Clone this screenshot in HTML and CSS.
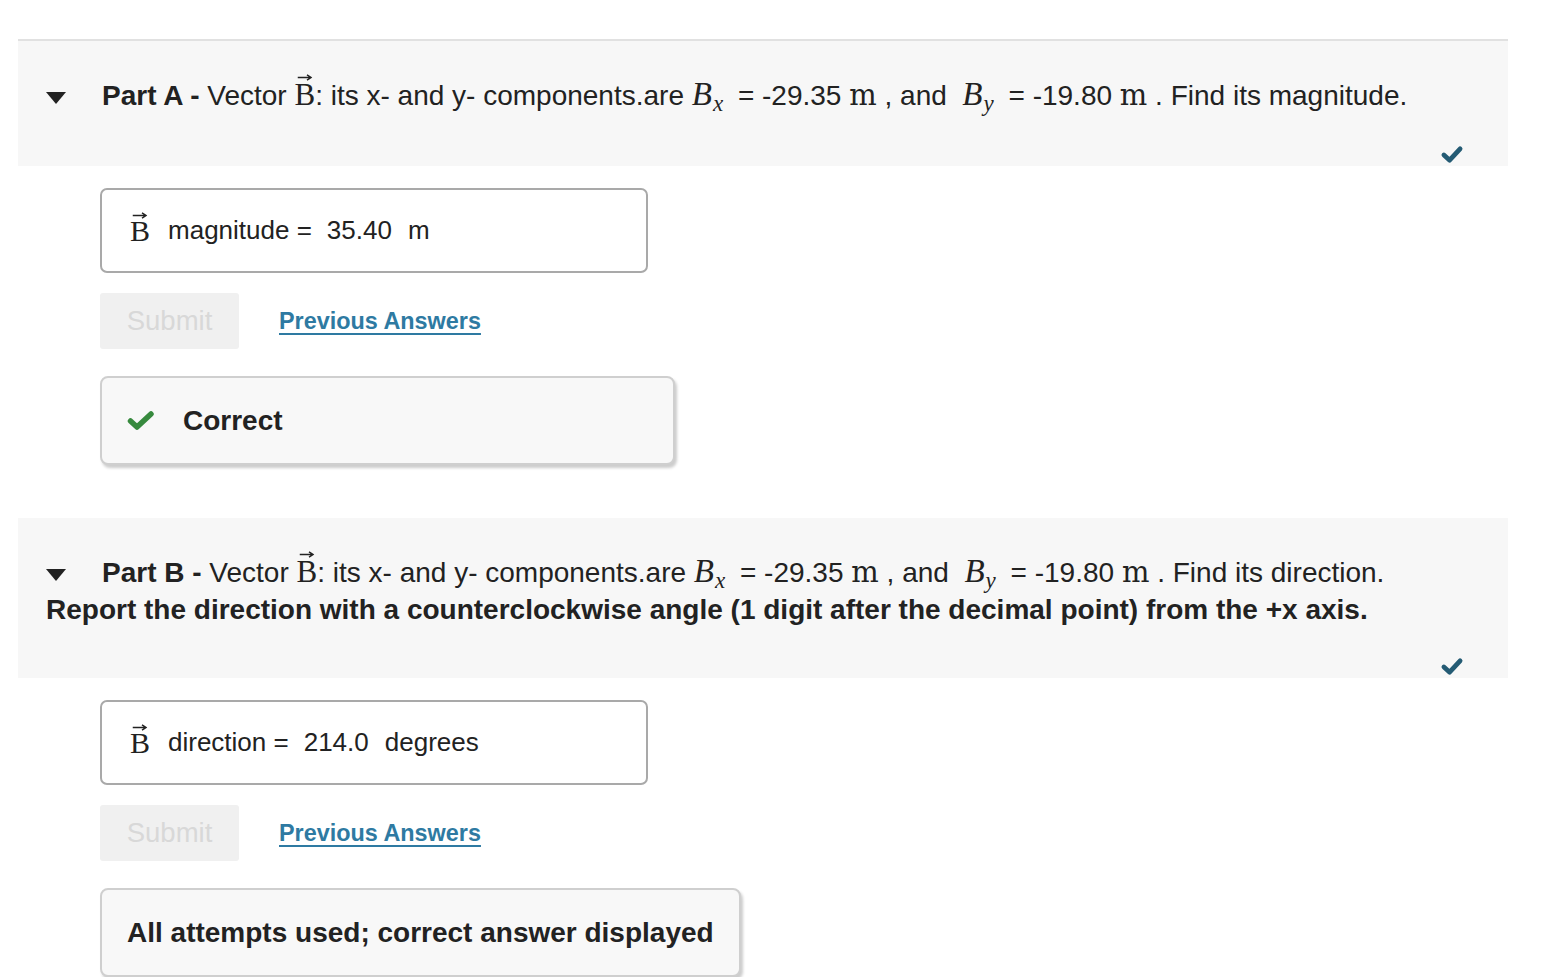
FILE: index.html
```html
<!DOCTYPE html>
<html>
<head>
  <meta charset="UTF-8">
  <meta name="viewport" content="width=device-width, initial-scale=1">
  <title>Vector components</title>

  <link rel="stylesheet" href="styles.css">
</head>

<body>

<main class="assignment">

  <!-- Part A -->
  <section class="part">
    <div class="part__header">
      <p class="part__prompt"><span class="toggle"></span><b>Part A -</b> Vector <span class="vec">B<svg class="vec__arrow" viewBox="0 0 15 7"><path d="M0 3.5H13M9.5 0.8L13.6 3.5L9.5 6.2"/></svg></span>: its x- and y- components.are <span class="math"><i>B</i><sub>x</sub></span> = -29.35 <span class="unit">m</span> , and &nbsp;<span class="math"><i>B</i><sub>y</sub></span> = -19.80 <span class="unit">m</span> . Find its magnitude.</p>
      <div class="part__status">
        <svg class="status-check" viewBox="0 0 24 20"><path d="M3.5 10.5L9.5 16L20.5 4"/></svg>
      </div>
    </div>

    <div class="part__body">
      <div class="answer">
        <span class="vec">B<svg class="vec__arrow" viewBox="0 0 15 7"><path d="M0 3.5H13M9.5 0.8L13.6 3.5L9.5 6.2"/></svg></span>
        <span class="answer__label">magnitude =</span>
        <span class="answer__value">35.40</span>
        <span class="answer__unit">m</span>
      </div>

      <div class="actions">
        <button class="button" disabled>Submit</button>
        <a href="#" class="link">Previous Answers</a>
      </div>

      <div class="feedback feedback--correct">
        <svg class="feedback__icon" viewBox="0 0 28 21"><path d="M3.5 11L10 17L24 4"/></svg>
        <span>Correct</span>
      </div>
    </div>
  </section>

  <!-- Part B -->
  <section class="part">
    <div class="part__header">
      <p class="part__prompt"><span class="toggle"></span><b>Part B -</b> Vector <span class="vec">B<svg class="vec__arrow" viewBox="0 0 15 7"><path d="M0 3.5H13M9.5 0.8L13.6 3.5L9.5 6.2"/></svg></span>: its x- and y- components.are <span class="math"><i>B</i><sub>x</sub></span> = -29.35 <span class="unit">m</span> , and &nbsp;<span class="math"><i>B</i><sub>y</sub></span> = -19.80 <span class="unit">m</span> . Find its direction.</p>
      <p class="part__note">Report the direction with a counterclockwise angle (1 digit after the decimal point) from the +x axis.</p>
      <div class="part__status">
        <svg class="status-check" viewBox="0 0 24 20"><path d="M3.5 10.5L9.5 16L20.5 4"/></svg>
      </div>
    </div>

    <div class="part__body">
      <div class="answer">
        <span class="vec">B<svg class="vec__arrow" viewBox="0 0 15 7"><path d="M0 3.5H13M9.5 0.8L13.6 3.5L9.5 6.2"/></svg></span>
        <span class="answer__label">direction =</span>
        <span class="answer__value">214.0</span>
        <span class="answer__unit">degrees</span>
      </div>

      <div class="actions">
        <button class="button" disabled>Submit</button>
        <a href="#" class="link">Previous Answers</a>
      </div>

      <div class="feedback">
        <span>All attempts used; correct answer displayed</span>
      </div>
    </div>
  </section>

</main>

</body>
</html>
```

FILE: styles.css
```css
html,
body {
  -moz-osx-font-smoothing: grayscale;
  -webkit-font-smoothing: antialiased;
}

body {
  margin: 0;
  font-family: "Liberation Sans", Arial, Helvetica, sans-serif;
  font-size: 28px;
  color: #222;
  background: #fff;
}

.assignment {
  margin: 39px 34px 0 18px;
  border-top: 2px solid #e1e1e1;
}


/* Part header */

.part + .part { margin-top: 53px; }

.part__header {
  padding: 36px 44px 2px 28px;
  background-color: #f7f7f7;
}

.part__prompt {
  margin: 0;
  line-height: 38px;
}

.part__note {
  margin: 0;
  font-weight: bold;
  line-height: 35px;
}

.toggle {
  display: inline-block;
  width: 0;
  height: 0;
  margin-right: 36px;
  border-left: 10.5px solid transparent;
  border-right: 10.5px solid transparent;
  border-top: 12px solid #222;
  vertical-align: 1px;
}

.part__status {
  display: flex;
  justify-content: flex-end;
  margin-top: 30px;
}

.status-check {
  width: 24px;
  height: 19px;
  display: block;
}
.status-check path {
  fill: none;
  stroke: #245b74;
  stroke-width: 5;
  stroke-linecap: round;
  stroke-linejoin: round;
}


/* Math bits */

.vec {
  position: relative;
  font-family: "Liberation Serif", "DejaVu Serif", serif;
  font-size: 31px;
  line-height: 0;
}

.vec__arrow {
  position: absolute;
  top: -3px;
  left: 50%;
  width: 15px;
  height: 7px;
  transform: translateX(-50%);
}
.vec__arrow path {
  fill: none;
  stroke: #222;
  stroke-width: 1.4;
}

.math {
  margin-right: 7px;
  font-family: "Liberation Serif", "DejaVu Serif", serif;
  font-size: 33px;
  line-height: 0;
  white-space: nowrap;
}

.math i { padding-right: 1px; }

.math sub {
  font-size: 23px;
  font-style: italic;
  line-height: 0;
  vertical-align: -6px;
}

.unit {
  font-family: "DejaVu Serif", "Liberation Serif", serif;
  font-size: 29px;
  line-height: 0;
}


/* Part body */

.part__body { padding: 22px 0 0 82px; }

.answer {
  display: flex;
  align-items: center;
  box-sizing: border-box;
  width: 548px;
  height: 85px;
  padding: 0 26px 0 28px;
  border: 2px solid #a9a9a9;
  border-radius: 7px;
  font-size: 26px;
}

.answer .vec {
  margin-right: 18px;
  font-size: 30px;
  line-height: 30px;
}
.answer .vec__arrow { top: -4px; }

.answer__value { margin-left: 15px; }
.answer__unit { margin-left: 16px; }

.actions {
  display: flex;
  align-items: center;
  gap: 40px;
  margin-top: 20px;
}

.button {
  width: 139px;
  height: 56px;
  padding: 0;
  font-family: inherit;
  font-size: 27.5px;
  color: #d8d8d8;
  background-color: #f0f0f0;
  border: 0;
  border-radius: 3px;
}

.link {
  font-size: 23.4px;
  font-weight: bold;
  color: #2e7aa2;
  text-decoration: underline;
  text-decoration-thickness: 2px;
  text-underline-offset: 4px;
}

.feedback {
  display: inline-flex;
  align-items: center;
  box-sizing: border-box;
  min-width: 575px;
  height: 89px;
  margin-top: 27px;
  padding: 0 25px 0 25px;
  font-weight: bold;
  background-color: #f8f8f8;
  border: 2px solid #cfcfcf;
  border-radius: 8px;
  box-shadow: 2px 3px 3px rgba(0,0,0,.2);
}

.feedback__icon {
  width: 28px;
  height: 21px;
  margin-right: 28px;
}
.feedback__icon path {
  fill: none;
  stroke: #378a3e;
  stroke-width: 5.5;
  stroke-linecap: round;
  stroke-linejoin: round;
}
```
